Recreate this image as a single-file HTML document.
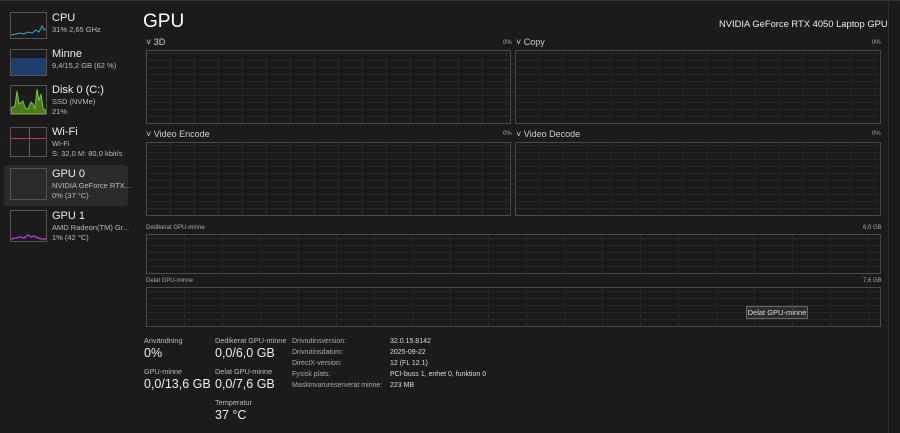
<!DOCTYPE html>
<html><head><meta charset="utf-8"><style>
*{margin:0;padding:0;box-sizing:border-box}
body{width:900px;height:433px;background:#1b1b1b;color:#fff;font-family:"Liberation Sans",sans-serif;position:relative;overflow:hidden}
.a{position:absolute;white-space:nowrap}
.item .t{position:absolute;border:1px solid #555;width:37px;height:27px;left:10px}
.n{font-size:11px;color:#eee}
.s{font-size:7.5px;color:#bbb;line-height:10px}
.g{position:absolute;border:1px solid #4a4a4a;background-color:#1a1a1a;
background-image:repeating-linear-gradient(90deg,transparent 0 23px,#282828 23px 24px),repeating-linear-gradient(0deg,transparent 0 6px,#282828 6px 7px)}
.l{font-size:9px;color:#ccc}
.p{font-size:6px;color:#aaa}
.sm{font-size:7.3px;color:#bbb}
.big{font-size:12.5px;color:#eee}
</style></head><body>
<div class="a" style="left:0;top:0;width:900px;height:1px;background:#333"></div>
<div class="a" style="left:4px;top:165px;width:124px;height:41px;background:#2b2b2b;border-radius:3px"></div>

<div class="item">
<div class="t" style="top:12px"><svg width="35" height="25"><polyline points="0,22 5,21 9,20 13,21 17,19 21,20 25,17 28,19 31,13 33,17 35,16" fill="none" stroke="#3fa3c8" stroke-width="1"/></svg></div>
<div class="a n" style="left:52px;top:12px">CPU</div><div class="a s" style="left:52px;top:25px">31% 2,65 GHz</div>
<div class="t" style="top:49px;background:linear-gradient(transparent 0 8px,#1e3d6e 8px)"></div>
<div class="a n" style="left:52px;top:48px">Minne</div><div class="a s" style="left:52px;top:61px">9,4/15,2 GB (62 %)</div>
<div class="t" style="top:85px;height:30px;overflow:hidden"><svg width="35" height="28"><polygon points="0,28 0,22 4,20 6,5 8,18 12,15 14,22 17,23 20,16 22,18 24,22 26,3 28,15 30,8 32,22 35,25 35,28" fill="#4e7a1e" stroke="#7cc42e" stroke-width="1"/></svg></div>
<div class="a n" style="left:52px;top:84px">Disk 0 (C:)</div><div class="a s" style="left:52px;top:97px">SSD (NVMe)<br>21%</div>
<div class="t" style="top:127px;height:30px"><div class="a" style="left:0;top:10px;width:35px;height:1px;background:#c8325a"></div><div class="a" style="left:18px;top:0;width:1px;height:28px;background:#c8325a"></div></div>
<div class="a n" style="left:52px;top:126px">Wi-Fi</div><div class="a s" style="left:52px;top:139px">Wi-Fi<br>S: 32,0 M: 80,0 kbit/s</div>
<div class="t" style="top:168px;height:32px"></div>
<div class="a n" style="left:52px;top:168px">GPU 0</div><div class="a s" style="left:52px;top:181px">NVIDIA GeForce RTX...<br>0% (37 °C)</div>
<div class="t" style="top:210px;height:32px"><svg width="35" height="30"><polyline points="0,28 5,27 9,26 13,27 17,24 20,26 23,25 27,27 31,28 35,28" fill="none" stroke="#a23bc2" stroke-width="1.5"/></svg></div>
<div class="a n" style="left:52px;top:210px">GPU 1</div><div class="a s" style="left:52px;top:223px">AMD Radeon(TM) Gr...<br>1% (42 °C)</div>
</div>

<div class="a" style="left:143px;top:11px;font-size:19px;color:#fff">GPU</div>
<div class="a" style="left:719px;top:18px;font-size:9.4px;color:#eee">NVIDIA GeForce RTX 4050 Laptop GPU</div>
<div class="a" style="left:888px;top:0;width:1px;height:433px;background:#2e2e2e"></div>

<div class="a l" style="left:146px;top:37px">˅ 3D</div><div class="a p" style="left:503px;top:40px">0%</div>
<div class="a l" style="left:516px;top:37px">˅ Copy</div><div class="a p" style="left:872px;top:40px">0%</div>
<div class="g" style="left:146px;top:50px;width:365px;height:74px"></div>
<div class="g" style="left:515px;top:50px;width:366px;height:74px"></div>
<div class="a l" style="left:146px;top:129px">˅ Video Encode</div><div class="a p" style="left:503px;top:131px">0%</div>
<div class="a l" style="left:516px;top:129px">˅ Video Decode</div><div class="a p" style="left:872px;top:131px">0%</div>
<div class="g" style="left:146px;top:142px;width:365px;height:74px"></div>
<div class="g" style="left:515px;top:142px;width:366px;height:74px"></div>
<div class="a p" style="left:146px;top:225px">Dedikerat GPU-minne</div><div class="a p" style="left:863px;top:225px">6,0 GB</div>
<div class="g" style="left:146px;top:234px;width:735px;height:40px;background-image:repeating-linear-gradient(90deg,transparent 0 37px,#282828 37px 38px),repeating-linear-gradient(0deg,transparent 0 6px,#282828 6px 7px)"></div>
<div class="a p" style="left:146px;top:278px">Delat GPU-minne</div><div class="a p" style="left:863px;top:278px">7,6 GB</div>
<div class="g" style="left:146px;top:287px;width:735px;height:40px;background-image:repeating-linear-gradient(90deg,transparent 0 37px,#282828 37px 38px),repeating-linear-gradient(0deg,transparent 0 6px,#282828 6px 7px)"></div>
<div class="a" style="left:746px;top:306px;width:62px;height:13px;border:1px solid #666;background:#2b2b2b;font-size:7.5px;color:#ddd;text-align:center;line-height:11px">Delat GPU-minne</div>

<div class="a sm" style="left:144px;top:336px">Användning</div><div class="a big" style="left:144px;top:346px">0%</div>
<div class="a sm" style="left:144px;top:367px">GPU-minne</div><div class="a big" style="left:144px;top:377px">0,0/13,6 GB</div>
<div class="a sm" style="left:215px;top:336px">Dedikerat GPU-minne</div><div class="a big" style="left:215px;top:346px">0,0/6,0 GB</div>
<div class="a sm" style="left:215px;top:367px">Delat GPU-minne</div><div class="a big" style="left:215px;top:377px">0,0/7,6 GB</div>
<div class="a sm" style="left:215px;top:398px">Temperatur</div><div class="a big" style="left:215px;top:408px">37 °C</div>
<div class="a sm" style="left:292px;top:336px;line-height:11px;color:#aaa;font-size:7px">Drivrutinsversion:<br>Drivrutinsdatum:<br>DirectX-version:<br>Fysisk plats:<br>Maskinvarureserverat minne:</div>
<div class="a sm" style="left:390px;top:336px;line-height:11px;color:#ddd;font-size:7px">32.0.15.8142<br>2025-09-22<br>12 (FL 12.1)<br>PCI-buss 1, enhet 0, funktion 0<br>223 MB</div>
</body></html>
